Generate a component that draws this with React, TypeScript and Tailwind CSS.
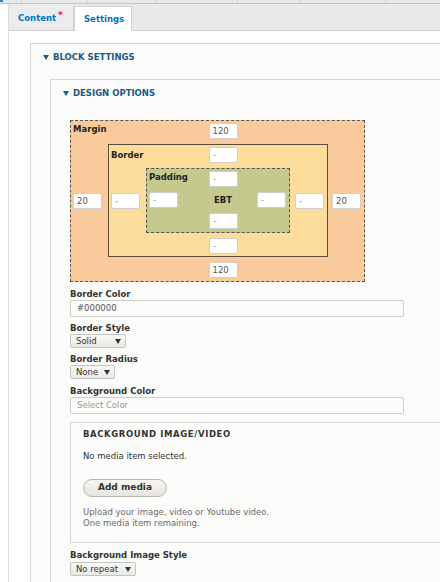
import React from 'react';

const font = { fontFamily: '"DejaVu Sans", Verdana, sans-serif' };

function Caret({ className = '' }: { className?: string }) {
    return (
        <svg width="6" height="5" viewBox="0 0 6 5" className={className}>
            <path d="M0 0h6L3 5z" fill="currentColor" />
        </svg>
    );
}

function BoxInput({ value = '-', dark = false }: { value?: string; dark?: boolean }) {
    return (
        <div
            className={`h-[16px] w-[29px] shrink-0 bg-white border border-[#cfcfcf] rounded-[2px] pl-[3px] text-[8.5px] leading-[14px] ${dark ? 'text-[#555]' : 'text-[#999]'}`}
        >
            {value}
        </div>
    );
}

function Label({ children, className = '' }: { children: React.ReactNode; className?: string }) {
    return <div className={`h-[12px] text-[8.5px] leading-[12px] font-bold text-[#333] ${className}`}>{children}</div>;
}

function Select({ value, width }: { value: string; width: string }) {
    return (
        <div
            className={`${width} h-[14px] flex items-center justify-between pl-[5px] pr-[4px] border border-[#c4c4c4] rounded-[2px] bg-gradient-to-b from-[#f8f8f5] to-[#e9e9e4] text-[8.5px] text-[#333]`}
        >
            <span>{value}</span>
            <Caret className="text-[#333]" />
        </div>
    );
}

function TextInput({ value, placeholder }: { value?: string; placeholder?: string }) {
    return (
        <div className="w-[334px] h-[17px] bg-[#fcfcfa] border border-[#cccccc] rounded-[2px] pl-[6px] text-[8.5px] leading-[15px]">
            {value ? <span className="text-[#555]">{value}</span> : <span className="text-[#999]">{placeholder}</span>}
        </div>
    );
}

function BoxModel() {
    return (
        <div className="w-[295px] h-[162px] border border-dashed border-[#555] bg-[#f9cb9c] p-[2px] pb-[3px] flex flex-col">
            {/* margin top */}
            <div className="relative flex justify-center pl-[11px]">
                <span className="absolute left-0 top-[1px] text-[8.5px] leading-[10px] font-bold text-[#222]">Margin</span>
                <BoxInput value="120" dark />
            </div>
            <div className="flex items-center mt-[5px]">
                <BoxInput value="20" dark />
                {/* border box */}
                <div className="ml-[6px] w-[220px] h-[113px] border border-[#5b4d3e] bg-[#fddd9c] p-[2px] flex flex-col">
                    <div className="relative flex justify-center pl-[11px]">
                        <span className="absolute left-0 top-[3px] text-[8.5px] leading-[10px] font-bold text-[#222]">Border</span>
                        <BoxInput />
                    </div>
                    <div className="flex items-center mt-[5px]">
                        <BoxInput />
                        {/* padding box */}
                        <div className="ml-[6px] w-[144px] h-[65px] border border-dashed border-[#555] bg-[#c5c98d] p-[2px] pb-[3px] flex flex-col">
                            <div className="relative flex justify-center pl-[11px]">
                                <span className="absolute left-0 top-[1px] text-[8.5px] leading-[10px] font-bold text-[#222]">Padding</span>
                                <BoxInput />
                            </div>
                            <div className="flex items-center justify-between mt-[5px] pr-[1px]">
                                <BoxInput />
                                <span className="text-[8.5px] font-bold text-[#222] ml-[11px]">EBT</span>
                                <BoxInput />
                            </div>
                            <div className="flex justify-center pl-[11px] mt-[5px]">
                                <BoxInput />
                            </div>
                        </div>
                        <div className="ml-[5px]">
                            <BoxInput />
                        </div>
                    </div>
                    <div className="flex justify-center pl-[11px] mt-[5px]">
                        <BoxInput />
                    </div>
                </div>
                <div className="ml-[4px]">
                    <BoxInput value="20" dark />
                </div>
            </div>
            <div className="flex justify-center pl-[11px] mt-[5px]">
                <BoxInput value="120" dark />
            </div>
        </div>
    );
}

export default function App() {
    return (
        <div className="w-[440px] h-[582px] overflow-hidden bg-white flex flex-col" style={font}>
            {/* Top toolbar remnant */}
            <div className="h-[4px] shrink-0 flex bg-[#e8e8e8] border-b border-[#c4c4c4]">
                <div className="w-[3px] h-[2px] bg-[#2f7fc1]" />
                <div className="ml-[18px] w-px bg-[#d4d4d4]" />
                <div className="ml-[65px] w-px bg-[#d4d4d4]" />
                <div className="ml-[68px] w-px bg-[#d4d4d4]" />
                <div className="ml-[80px] w-px bg-[#d4d4d4]" />
                <div className="ml-[61px] w-px bg-[#d4d4d4]" />
                <div className="ml-[85px] w-px bg-[#d4d4d4]" />
            </div>

            <div className="flex flex-1">
                {/* Left gutter */}
                <div className="w-[9px] shrink-0 border-r border-[#dedede]" />

                <div className="flex-1 flex flex-col">
                    {/* Tabs */}
                    <div className="h-[27px] shrink-0 flex items-end bg-[#e9e9e9] border-b border-[#cfcfcf]">
                        <div className="h-[24px] w-[65px] flex items-center pl-[9px] border-r border-[#d6d6d6] bg-[#ececec] text-[8.5px] font-bold text-[#0074bd]">
                            Content<span className="text-[#e62600] ml-[2px] -mt-[5px] text-[9px]">*</span>
                        </div>
                        <div className="relative h-[25px] -mb-px w-[58px] flex items-center pl-[9px] bg-white border-x border-t border-[#d0d0d0] text-[8.5px] font-bold text-[#0074bd]">
                            Settings
                        </div>
                    </div>

                    {/* Content */}
                    <div className="pt-[12px] pl-[21px]">
                        <div className="w-[430px] border border-[#d4d4d4] bg-[#fbfbfa] pl-[19px]">
                            <div className="h-[26px] -ml-[7px] flex items-center gap-[4px] text-[8.5px] font-bold text-[#1d5a85]">
                                <Caret />
                                <span>BLOCK SETTINGS</span>
                            </div>

                            <div className="mt-[9px] w-[420px] border border-[#d4d4d4] bg-[#fbfbfa] pl-[19px]">
                                <div className="h-[26px] -ml-[7px] flex items-center gap-[4px] text-[8.5px] font-bold text-[#1d5a85]">
                                    <Caret />
                                    <span>DESIGN OPTIONS</span>
                                </div>

                                <div className="mt-[14px]">
                                    <BoxModel />
                                </div>

                                <Label className="mt-[6px]">Border Color</Label>
                                <TextInput value="#000000" />

                                <Label className="mt-[5px]">Border Style</Label>
                                <Select value="Solid" width="w-[56px]" />

                                <Label className="mt-[5px]">Border Radius</Label>
                                <Select value="None" width="w-[45px]" />

                                <Label className="mt-[6px]">Background Color</Label>
                                <TextInput placeholder="Select Color" />

                                {/* Background image / video */}
                                <div className="mt-[8px] w-[400px] border border-[#d4d4d4] bg-[#fcfcfa] pl-[12px] pt-[5px] pb-[13px]">
                                    <div className="h-[12px] leading-[12px] text-[8.5px] font-bold tracking-[0.6px] text-[#333]">
                                        BACKGROUND IMAGE/VIDEO
                                    </div>
                                    <div className="mt-[10px] h-[12px] leading-[12px] text-[8.5px] text-[#333]">
                                        No media item selected.
                                    </div>
                                    <button className="mt-[17px] h-[18px] w-[84px] rounded-full border border-[#b8b8b0] bg-gradient-to-b from-[#f7f6f1] to-[#e6e4dc] text-[9px] font-bold text-[#333] flex items-center justify-center">
                                        Add media
                                    </button>
                                    <div className="mt-[10px] text-[8.5px] leading-[11px] text-[#6b6b6b]">
                                        <div>Upload your image, video or Youtube video.</div>
                                        <div>One media item remaining.</div>
                                    </div>
                                </div>

                                <Label className="mt-[6px]">Background Image Style</Label>
                                <div className="mt-[1px]">
                                    <Select value="No repeat" width="w-[66px]" />
                                </div>
                                <div className="h-[20px]" />
                            </div>
                        </div>
                    </div>
                </div>
            </div>
        </div>
    );
}
